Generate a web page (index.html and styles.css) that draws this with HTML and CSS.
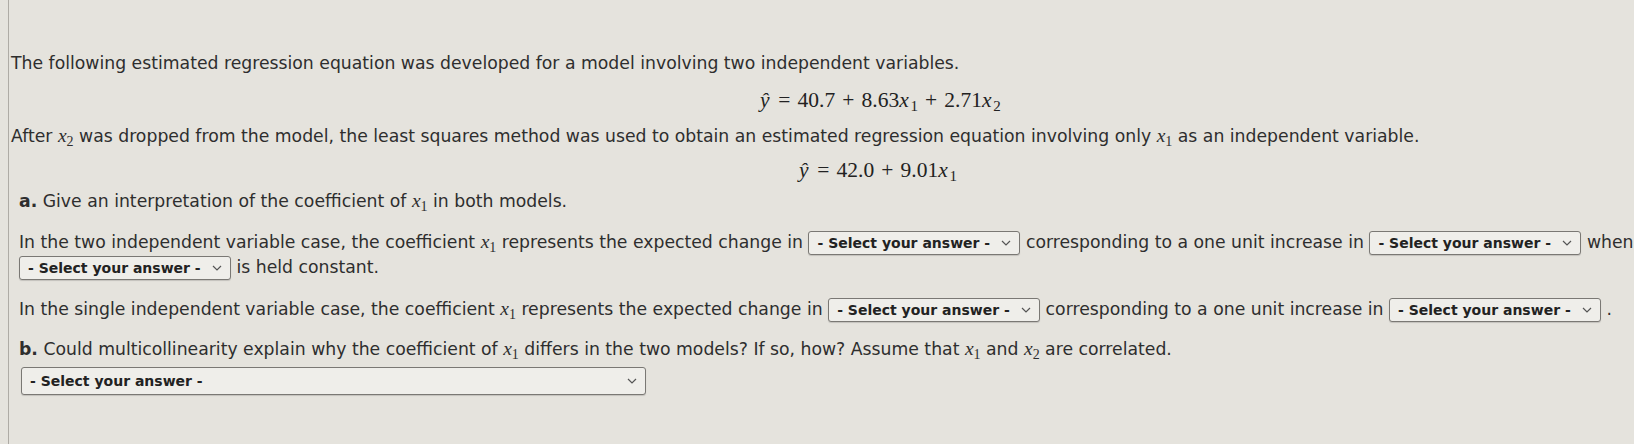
FILE: index.html
```html
<!DOCTYPE html>
<html>
<head>
<meta charset="utf-8">
<link rel="stylesheet" href="styles.css">
</head>
<body>
<div class="page">
  <p class="line intro">The following estimated regression equation was developed for a model involving two independent variables.</p>
  <p class="eq eq1"><span class="mi">ŷ</span><span class="rel">=</span>40.7<span class="op">+</span>8.63<span class="mi">x</span><sub>1</sub><span class="op">+</span>2.71<span class="mi">x</span><sub>2</sub></p>
  <p class="line after">After <span class="mv">x</span><sub class="sb">2</sub> was dropped from the model, the least squares method was used to obtain an estimated regression equation involving only <span class="mv">x</span><sub class="sb">1</sub> as an independent variable.</p>
  <p class="eq eq2"><span class="mi">ŷ</span><span class="rel">=</span>42.0<span class="op">+</span>9.01<span class="mi">x</span><sub>1</sub></p>
  <div class="part">
    <p class="line qa"><b>a.</b> Give an interpretation of the coefficient of <span class="mv">x</span><sub class="sb">1</sub> in both models.</p>
    <p class="line ans two">In the two independent variable case, the coefficient <span class="mv">x</span><sub class="sb">1</sub> represents the expected change in <span class="sel">- Select your answer -<svg class="chev" viewBox="0 0 10 6"><path d="M1 1 L5 5 L9 1"/></svg></span> corresponding to a one unit increase in <span class="sel">- Select your answer -<svg class="chev" viewBox="0 0 10 6"><path d="M1 1 L5 5 L9 1"/></svg></span> when<br><span class="sel">- Select your answer -<svg class="chev" viewBox="0 0 10 6"><path d="M1 1 L5 5 L9 1"/></svg></span> is held constant.</p>
    <p class="line ans single">In the single independent variable case, the coefficient <span class="mv">x</span><sub class="sb">1</sub> represents the expected change in <span class="sel">- Select your answer -<svg class="chev" viewBox="0 0 10 6"><path d="M1 1 L5 5 L9 1"/></svg></span> corresponding to a one unit increase in <span class="sel">- Select your answer -<svg class="chev" viewBox="0 0 10 6"><path d="M1 1 L5 5 L9 1"/></svg></span> .</p>
    <p class="line qb"><b>b.</b> Could multicollinearity explain why the coefficient of <span class="mv">x</span><sub class="sb">1</sub> differs in the two models? If so, how? Assume that <span class="mv">x</span><sub class="sb">1</sub> and <span class="mv">x</span><sub class="sb">2</sub> are correlated.</p>
    <div class="sel wide">- Select your answer -<svg class="chev" viewBox="0 0 10 6"><path d="M1 1 L5 5 L9 1"/></svg></div>
  </div>
</div>
</body>
</html>
```

FILE: styles.css
```css
html, body {
  margin: 0;
  padding: 0;
}
body {
  background: #e5e3dd;
  width: 1634px;
  height: 444px;
  overflow: hidden;
  font-family: "DejaVu Sans", Verdana, sans-serif;
  color: #2e2e2e;
}
.page {
  margin-left: 8px;
  border-left: 1px solid #aeaba5;
  height: 444px;
  padding-left: 2px;
  box-sizing: border-box;
  padding-top: 53px;
}
p { margin: 0; }
.line {
  font-size: 17.25px;
  line-height: 20px;
  white-space: nowrap;
}
.eq {
  font-family: "Liberation Serif", "Times New Roman", serif;
  font-size: 21.5px;
  line-height: 20px;
  color: #222;
  white-space: nowrap;
}
.eq sub, .sb {
  font-size: 0.7em;
  vertical-align: -0.25em;
  line-height: 0;
}
.sb { font-family: "Liberation Serif", serif; font-size: 14px; }
.mi, .mv {
  font-family: "Liberation Serif", "Times New Roman", serif;
  font-style: italic;
}
.mi { margin-right: 0.08em; }
.mv { font-size: 19.5px; }
.op { margin: 0 0.33em; }
.rel { margin: 0 0.33em; }
.eq1 { margin-top: 17px; padding-left: 749px; }
.after { margin-top: 16px; }
.eq2 { margin-top: 14px; padding-left: 788px; }
.part { padding-left: 8px; }
.qa { margin-top: 11px; }
.ans { line-height: 25px; }
.two { margin-top: 18px; }
.single { margin-top: 16px; }
.qb { margin-top: 17px; }
.sel {
  display: inline-flex;
  align-items: center;
  justify-content: space-between;
  box-sizing: border-box;
  width: 212px;
  height: 24px;
  padding: 0 8px 0 8px;
  vertical-align: middle;
  background: #efeeea;
  border: 1px solid #7a7874;
  border-radius: 3px;
  box-shadow: 0 1px 1px rgba(0,0,0,0.15);
  font-family: "DejaVu Sans", Verdana, sans-serif;
  font-weight: bold;
  font-size: 14px;
  color: #222;
  line-height: 1;
}
.chev {
  width: 10px;
  height: 6px;
  fill: none;
  stroke: #555;
  stroke-width: 1.2;
}
.wide {
  display: flex;
  width: 625px;
  height: 28px;
  margin-top: 8px;
  margin-left: 2px;
}
```
